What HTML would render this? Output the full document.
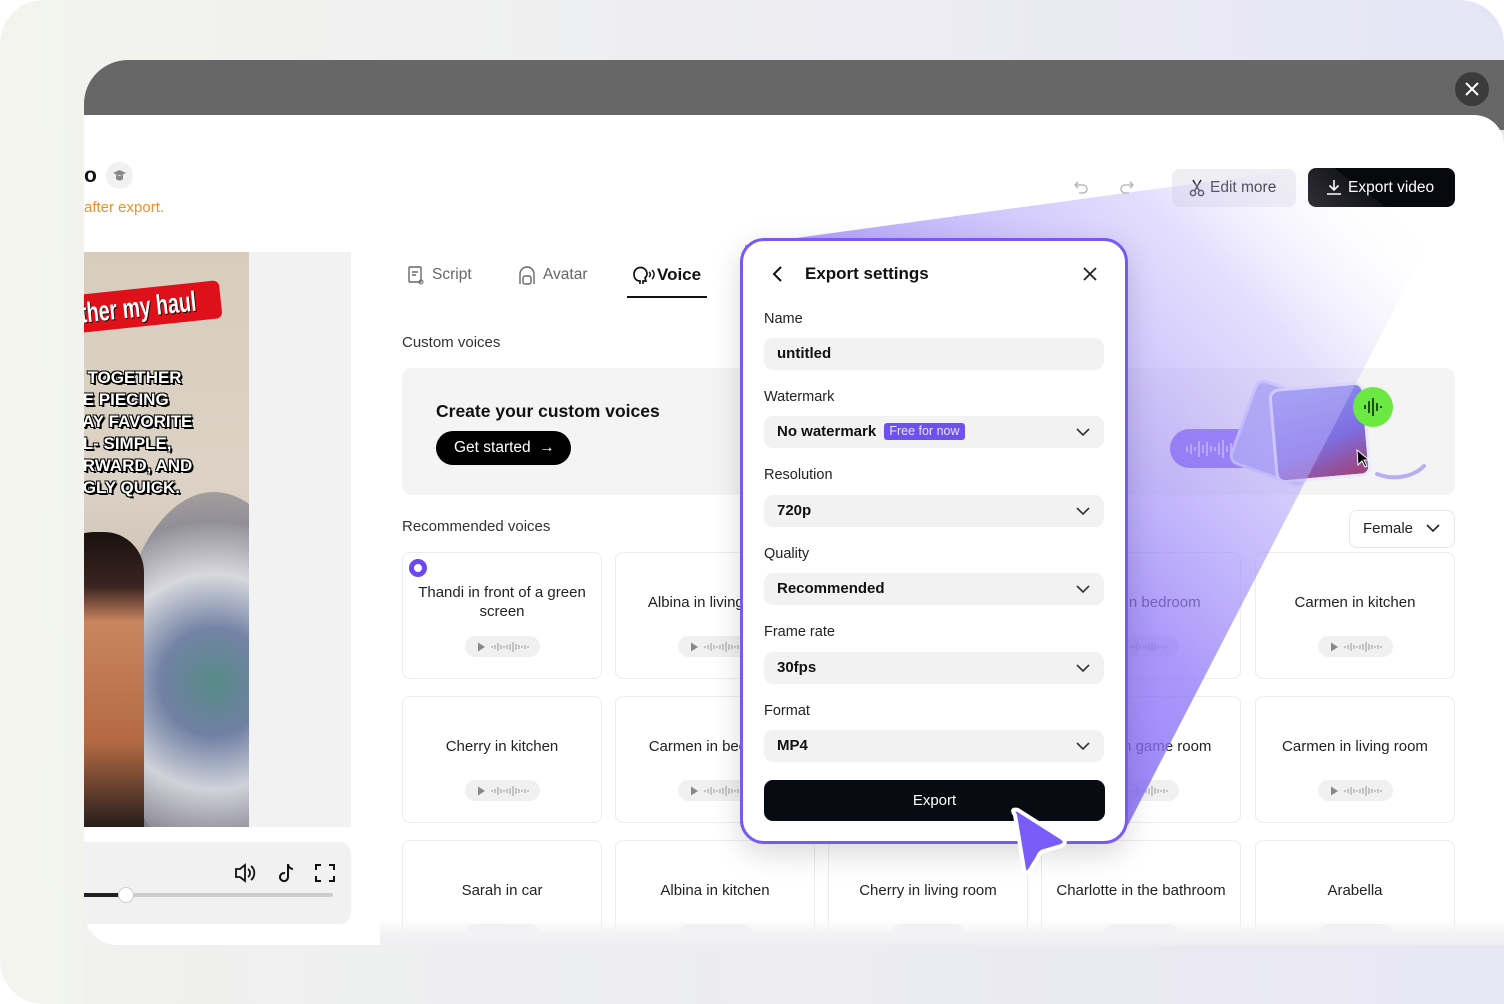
<!DOCTYPE html>
<html><head><meta charset="utf-8"><style>
*{box-sizing:border-box;margin:0;padding:0}
body{width:1504px;height:1004px;overflow:hidden;font-family:"Liberation Sans",sans-serif;background:#fff;position:relative;color:#111}
.abs{position:absolute}
.card{position:absolute;width:200px;height:127px;border:1px solid #ececec;border-radius:8px;background:#fff;text-align:center;font-size:15px;color:#222}
.card .t{position:absolute;left:0;right:0;top:40px;line-height:19px;padding:0 6px}
.pill{position:absolute;left:62px;top:83px;width:75px;height:21px;border-radius:11px;background:#f0f0f0}
.sel{position:absolute;left:764px;width:340px;height:32px;border-radius:9px;background:#f2f2f2;font-size:15px;font-weight:bold;padding-left:13px;line-height:32px;color:#111}
.sel svg{position:absolute;right:14px;top:11px}
.lbl{position:absolute;left:764px;font-size:14.5px;color:#222}
</style></head><body>
<div class="abs" style="left:0;top:0;width:1504px;height:1004px;border-radius:44px;background:linear-gradient(90deg,#f3f4ee 0%,#ececf2 60%,#e6e5f6 100%)"></div>
<div class="abs" style="left:84px;top:60px;width:1420px;height:70px;border-top-left-radius:44px;background:#676767"></div>
<div class="abs" style="left:1455px;top:72px;width:34px;height:34px;border-radius:50%;background:#3b3b3b"></div>
<svg class="abs" style="left:1464px;top:81px" width="16" height="16"><path d="M2 2L14 14M14 2L2 14" stroke="#fff" stroke-width="2"/></svg>
<div class="abs" style="left:84px;top:115px;width:1420px;height:830px;background:#fff;border-top-right-radius:30px;border-bottom-left-radius:34px;overflow:hidden"></div>
<!-- header -->
<div class="abs" style="left:84px;top:164px;font-size:21px;font-weight:bold">o</div>
<div class="abs" style="left:106px;top:162px;width:27px;height:27px;border-radius:50%;background:#f1f1f1"></div>
<svg class="abs" style="left:112px;top:168px" width="15" height="15"><path d="M1 5L7.5 2L14 5L7.5 8Z M4 7v4c2 2 5 2 7 0V7" fill="#888"/></svg>
<div class="abs" style="left:84px;top:199px;font-size:15px;color:#f0902a">after export.</div>
<svg class="abs" style="left:1073px;top:178px" width="18" height="18"><path d="M5 4L2 7L5 10M2 7h8a4 4 0 010 8H6" fill="none" stroke="#bbb" stroke-width="1.6"/></svg>
<svg class="abs" style="left:1117px;top:178px" width="18" height="18"><path d="M13 4L16 7L13 10M16 7H8a4 4 0 000 8h4" fill="none" stroke="#bbb" stroke-width="1.6"/></svg>
<div class="abs" style="left:1172px;top:169px;width:124px;height:38px;border-radius:8px;background:#eeeef3;font-size:15.5px;line-height:38px;padding-left:38px;color:#222">Edit more</div>
<svg class="abs" style="left:1189px;top:179px" width="16" height="18"><circle cx="4" cy="14" r="2.6" fill="none" stroke="#222" stroke-width="1.5"/><circle cx="12" cy="14" r="2.6" fill="none" stroke="#222" stroke-width="1.5"/><path d="M5.5 12L12 1M10.5 12L4 1" stroke="#222" stroke-width="1.5"/></svg>
<div class="abs" style="left:1308px;top:168px;width:147px;height:39px;border-radius:8px;background:#08080f;color:#fff;font-size:15.5px;line-height:39px;padding-left:40px">Export video</div>
<svg class="abs" style="left:1326px;top:179px" width="16" height="16"><path d="M8 1v10M3.5 6.5L8 11l4.5-4.5M1 15h14" fill="none" stroke="#fff" stroke-width="1.6"/></svg>
<!-- video -->
<div class="abs" style="left:84px;top:252px;width:267px;height:575px;background:#f2f2f2"></div>
<div class="abs" style="left:84px;top:252px;width:165px;height:575px;background:linear-gradient(180deg,#d8cdbd 0%,#dcd3c6 40%,#cfc4b6 55%,#9a8f90 75%,#7d7a88 100%);overflow:hidden">
 <div class="abs" style="left:30px;top:240px;width:200px;height:380px;border-radius:50%;background:radial-gradient(circle,#4f8a86 0%,#6d7fa6 25%,#d9dbe2 50%,#8a8894 75%,#b0a49a 100%);opacity:.9"></div>
 <div class="abs" style="left:-30px;top:280px;width:90px;height:300px;border-radius:40px 40px 0 0;background:linear-gradient(180deg,#1a1210 0%,#3a2420 18%,#c9855f 30%,#b46a43 70%,#1f1a1a 100%)"></div>
 <div class="abs" style="left:-15px;top:36px;width:152px;height:38px;background:#e0101a;border-radius:6px;transform:rotate(-6deg);color:#fff;font-weight:bold;font-size:28px;line-height:38px;white-space:nowrap;overflow:hidden;text-shadow:1px 1px 0 #000"><span style="display:inline-block;transform:scaleX(.7);transform-origin:left">ether my haul</span></div>
 <div class="abs" style="left:-6px;top:115px;color:#fff;font-weight:bold;font-size:17px;line-height:22px;text-shadow:-1px -1px 0 #000,1px 1px 0 #000,2px 2px 0 #000,-1px 1px 0 #000,1px -1px 0 #000;white-space:pre">  TOGETHER
 E PIECING
 AY FAVORITE
 L- SIMPLE,
 RWARD, AND
 GLY QUICK.</div>
</div>
<div class="abs" style="left:84px;top:842px;width:267px;height:82px;background:#f1f1f1;border-radius:0 12px 12px 0"></div>
<svg class="abs" style="left:234px;top:862px" width="110" height="22"><path d="M2 7h4l5-4v16l-5-4H2z" fill="none" stroke="#111" stroke-width="1.8"/><path d="M14 7a5 5 0 010 8M17 4a9 9 0 010 14" fill="none" stroke="#111" stroke-width="1.8"/><path d="M54 2v13a4 4 0 11-3-3.8M54 2c0 3 3 5 5 5" fill="none" stroke="#111" stroke-width="2"/><path d="M82 8V3h5M95 3h5v5M100 14v5h-5M87 19h-5v-5" fill="none" stroke="#111" stroke-width="2"/></svg>
<div class="abs" style="left:84px;top:893px;width:249px;height:4px;border-radius:2px;background:#ccc"></div>
<div class="abs" style="left:84px;top:893px;width:42px;height:4px;background:#222"></div>
<div class="abs" style="left:118px;top:887px;width:16px;height:16px;border-radius:50%;background:#fff;border:1px solid #ccc"></div>
<!-- tabs -->
<svg class="abs" style="left:408px;top:266px" width="18" height="19"><rect x="1" y="1" width="12" height="15" rx="1" fill="none" stroke="#666" stroke-width="1.4"/><path d="M4 6h6M4 9h4" stroke="#666" stroke-width="1.4"/><circle cx="13" cy="16" r="2" fill="none" stroke="#666" stroke-width="1"/></svg>
<div class="abs" style="left:432px;top:266px;font-size:15.5px;color:#666">Script</div>
<svg class="abs" style="left:518px;top:266px" width="18" height="19"><path d="M2 18V8a7 7 0 0114 0v10" fill="none" stroke="#666" stroke-width="1.4"/><rect x="5" y="10" width="8" height="8" rx="2" fill="none" stroke="#666" stroke-width="1.4"/></svg>
<div class="abs" style="left:543px;top:266px;font-size:15.5px;color:#666">Avatar</div>
<svg class="abs" style="left:632px;top:266px" width="24" height="20"><path d="M8 18v-3c-4 0-6-3-6-7a6.5 6.5 0 0113 0c0 2-1 3-2 4l1 3h-3v3" fill="none" stroke="#111" stroke-width="1.7"/><path d="M17 6a3 3 0 010 5M20 4a6 6 0 010 9" fill="none" stroke="#111" stroke-width="1.5"/></svg>
<div class="abs" style="left:657px;top:265px;font-size:17px;font-weight:bold">Voice</div>
<div class="abs" style="left:627px;top:296px;width:80px;height:2px;background:#111"></div>
<div class="abs" style="left:402px;top:334px;font-size:15px;color:#333">Custom voices</div>
<div class="abs" style="left:402px;top:368px;width:1053px;height:127px;border-radius:10px;background:#f4f4f4"></div>
<div class="abs" style="left:436px;top:401px;font-size:17.5px;font-weight:bold">Create your custom voices</div>
<div class="abs" style="left:436px;top:431px;width:135px;height:34px;border-radius:17px;background:#000;color:#fff;font-size:15.5px;line-height:34px;padding-left:18px">Get started &nbsp;→</div>
<!-- illustration -->
<div class="abs" style="left:1170px;top:429px;width:100px;height:39px;border-radius:20px;background:#7b5af0"></div>
<svg class="abs" style="left:1185px;top:437px" width="70" height="24"><path d="M2 9v6M6 7v10M10 10v4M14 4v16M18 8v8M22 5v14M26 9v6M30 10v4M34 6v12M38 3v18M42 9v6M46 6v12M50 10v4M54 7v10" stroke="#c8bcff" stroke-width="2"/></svg>
<div class="abs" style="left:1240px;top:388px;width:80px;height:90px;border-radius:10px;background:#a8a6f0;border:3px solid #d7d6fb;transform:rotate(20deg)"></div>
<div class="abs" style="left:1272px;top:385px;width:96px;height:95px;border-radius:10px;background:linear-gradient(160deg,#8f96f2,#7e6ee0 60%,#a04070);border:3px solid #e9e8ff;transform:rotate(-5deg)"></div>
<div class="abs" style="left:1353px;top:387px;width:40px;height:40px;border-radius:50%;background:#6ce843"></div>
<svg class="abs" style="left:1362px;top:397px" width="22" height="20"><path d="M3 8v4M7 4v12M11 1v18M15 6v8M19 9v2" stroke="#1a5010" stroke-width="2"/></svg>
<svg class="abs" style="left:1355px;top:448px" width="75" height="34"><path d="M2 2l12 10-5 0 3 6-2 1-3-6-4 4z" fill="#000" stroke="#fff"/><path d="M22 26c15 6 35 4 47-8" fill="none" stroke="#b9adf3" stroke-width="4" stroke-linecap="round"/></svg>
<div class="abs" style="left:402px;top:518px;font-size:15px;color:#333">Recommended voices</div>
<div class="abs" style="left:1349px;top:510px;width:106px;height:38px;border-radius:8px;border:1px solid #e6e6e6;font-size:15px;line-height:36px;padding-left:13px;color:#222">Female</div>
<svg class="abs" style="left:1426px;top:523px" width="14" height="10"><path d="M1 2l6 6 6-6" fill="none" stroke="#222" stroke-width="1.6"/></svg>
<!-- cards -->
<div class="abs" style="left:0;top:0;width:1504px;height:932px;overflow:hidden"><div id="cards"></div></div>
<script>
var cols=[402,615,828,1041,1255],rows=[552,696,840];
var names=[["Thandi in front of a green screen","Albina in living room","Cherry in bedroom","Sarah in bedroom","Carmen in kitchen"],["Cherry in kitchen","Carmen in bedroom","Albina in bedroom","Cherry in game room","Carmen in living room"],["Sarah in car","Albina in kitchen","Cherry in living room","Charlotte in the bathroom","Arabella"]];
var wave='<svg style="position:absolute;left:12px;top:5px" width="58" height="12"><path d="M1 1.5l7 4.5-7 4.5z" fill="#888"/><path d="M15 5v2M18 4v4M21 2v8M24 4v4M27 5v2M30 4v4M33 3v6M36 1v10M39 3v6M42 4v4M45 5v2M48 4v4M51 5v2" stroke="#999" stroke-width="1"/></svg>';
var h='';
for(var r=0;r<3;r++)for(var c=0;c<5;c++){var n=names[r][c];h+='<div class="card" style="left:'+cols[c]+'px;top:'+rows[r]+'px"><div class="t" style="'+(r==0&&c==0?'top:30px':'')+'">'+n+'</div><div class="pill">'+wave+'</div>'+(r==0&&c==0?'<div style="position:absolute;left:6px;top:6px;width:18px;height:18px;border-radius:50%;border:5px solid #6c48f0"></div>':'')+'</div>';}
document.getElementById('cards').innerHTML=h;
</script>
<div class="abs" style="left:380px;top:920px;width:1124px;height:25px;background:linear-gradient(180deg,rgba(255,255,255,0),#f3f3f5 50%,#efeff3)"></div>
<div class="abs" style="left:84px;top:945px;width:1420px;height:59px;background:linear-gradient(90deg,#f0f1ee,#e8e7f4)"></div>
<!-- beam -->
<svg class="abs" style="left:0;top:0" width="1504" height="1004"><defs><linearGradient id="g" x1="760" y1="820" x2="1400" y2="200" gradientUnits="userSpaceOnUse"><stop offset="0" stop-color="#7350f6" stop-opacity=".95"/><stop offset=".45" stop-color="#8c74f8" stop-opacity=".75"/><stop offset=".8" stop-color="#c4b8fb" stop-opacity=".45"/><stop offset="1" stop-color="#ffffff" stop-opacity="0"/></linearGradient></defs><polygon points="745,245 1330,165 1430,240 1128,825 745,825" fill="url(#g)"/></svg>
<!-- modal -->
<div class="abs" style="left:740px;top:238px;width:388px;height:606px;border:3px solid #7859f5;border-radius:24px;background:#fff;box-shadow:0 10px 30px rgba(0,0,0,.15)"></div>
<svg class="abs" style="left:771px;top:265px" width="14" height="18"><path d="M10 2L3 9l7 7" fill="none" stroke="#111" stroke-width="2"/></svg>
<div class="abs" style="left:805px;top:264px;font-size:17px;font-weight:bold">Export settings</div>
<svg class="abs" style="left:1082px;top:266px" width="16" height="16"><path d="M2 2l12 12M14 2L2 14" stroke="#222" stroke-width="1.8"/></svg>
<div class="lbl" style="top:311px">Name</div>
<div class="sel" style="top:338px">untitled</div>
<div class="lbl" style="top:389px">Watermark</div>
<div class="sel" style="top:416px">No watermark <span style="display:inline-block;margin-left:4px;background:#6e50ef;color:#e8e2ff;font-size:12.5px;font-weight:normal;line-height:17px;padding:0 5px;border-radius:3px;vertical-align:1px">Free for now</span><svg width="14" height="10"><path d="M1 2l6 6 6-6" fill="none" stroke="#333" stroke-width="1.6"/></svg></div>
<div class="lbl" style="top:467px">Resolution</div>
<div class="sel" style="top:495px">720p<svg width="14" height="10"><path d="M1 2l6 6 6-6" fill="none" stroke="#333" stroke-width="1.6"/></svg></div>
<div class="lbl" style="top:546px">Quality</div>
<div class="sel" style="top:573px">Recommended<svg width="14" height="10"><path d="M1 2l6 6 6-6" fill="none" stroke="#333" stroke-width="1.6"/></svg></div>
<div class="lbl" style="top:624px">Frame rate</div>
<div class="sel" style="top:652px">30fps<svg width="14" height="10"><path d="M1 2l6 6 6-6" fill="none" stroke="#333" stroke-width="1.6"/></svg></div>
<div class="lbl" style="top:703px">Format</div>
<div class="sel" style="top:730px">MP4<svg width="14" height="10"><path d="M1 2l6 6 6-6" fill="none" stroke="#333" stroke-width="1.6"/></svg></div>
<div class="abs" style="left:764px;top:780px;width:341px;height:41px;border-radius:9px;background:#090b12;color:#fff;font-size:15px;line-height:41px;text-align:center">Export</div>
<svg class="abs" style="left:0;top:0" width="1504" height="1004"><path d="M1015 815 Q1010 808 1018 810 L1062 838 Q1068 843 1061 846 L1044 851 Q1040 852 1038 857 L1030 870 Q1026 876 1024 869 Z" fill="#7a5cf8" stroke="#fff" stroke-width="4" stroke-linejoin="round"/></svg>
</body></html>
